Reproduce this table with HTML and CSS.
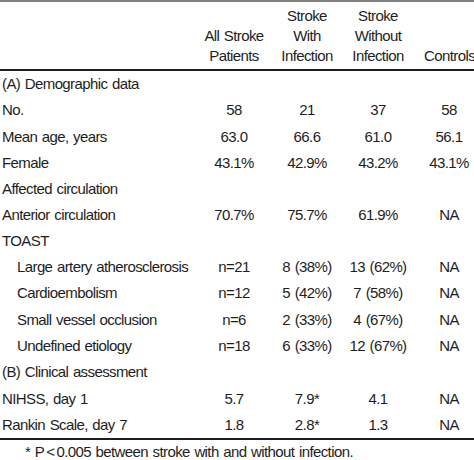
FILE: index.html
```html
<!DOCTYPE html>
<html>
<head>
<meta charset="utf-8">
<link rel="stylesheet" href="styles.css">
</head>
<body>
<div class="topbar"></div>
<table class="tbl">
  <colgroup>
    <col class="c-label">
    <col class="c-all">
    <col class="c-with">
    <col class="c-without">
    <col class="c-ctrl">
  </colgroup>
  <thead>
    <tr>
      <th class="label"></th>
      <th>All Stroke<br>Patients</th>
      <th>Stroke<br>With<br>Infection</th>
      <th>Stroke<br>Without<br>Infection</th>
      <th class="ctrl">Controls</th>
    </tr>
  </thead>
  <tbody>
    <tr><td class="label" colspan="5">(A) Demographic data</td></tr>
    <tr><td class="label">No.</td><td>58</td><td>21</td><td>37</td><td class="ctrl">58</td></tr>
    <tr class="tall"><td class="label">Mean age, years</td><td>63.0</td><td>66.6</td><td>61.0</td><td class="ctrl">56.1</td></tr>
    <tr><td class="label">Female</td><td>43.1%</td><td>42.9%</td><td>43.2%</td><td class="ctrl">43.1%</td></tr>
    <tr><td class="label" colspan="5">Affected circulation</td></tr>
    <tr><td class="label">Anterior circulation</td><td>70.7%</td><td>75.7%</td><td>61.9%</td><td class="ctrl">NA</td></tr>
    <tr><td class="label" colspan="5">TOAST</td></tr>
    <tr><td class="label sub">Large artery atherosclerosis</td><td>n=21</td><td>8 (38%)</td><td>13 (62%)</td><td class="ctrl">NA</td></tr>
    <tr><td class="label sub">Cardioembolism</td><td>n=12</td><td>5 (42%)</td><td>7 (58%)</td><td class="ctrl">NA</td></tr>
    <tr class="tall"><td class="label sub">Small vessel occlusion</td><td>n=6</td><td>2 (33%)</td><td>4 (67%)</td><td class="ctrl">NA</td></tr>
    <tr><td class="label sub">Undefined etiology</td><td>n=18</td><td>6 (33%)</td><td>12 (67%)</td><td class="ctrl">NA</td></tr>
    <tr><td class="label" colspan="5">(B) Clinical assessment</td></tr>
    <tr class="tall"><td class="label">NIHSS, day 1</td><td>5.7</td><td>7.9*</td><td>4.1</td><td class="ctrl">NA</td></tr>
    <tr class="last"><td class="label">Rankin Scale, day 7</td><td>1.8</td><td>2.8*</td><td>1.3</td><td class="ctrl">NA</td></tr>
  </tbody>
</table>
<p class="note">* P<span class="lt">&lt;</span>0.005 between stroke with and without infection.</p>
</body>
</html>
```

FILE: styles.css
```css
html, body {
  margin: 0;
  padding: 0;
  background: #fff;
  overflow: hidden;
}
body {
  font-family: "Liberation Sans", Arial, sans-serif;
  font-size: 15px;
  letter-spacing: -0.6px;
  word-spacing: 1px;
  color: #1e1e1e;
  width: 474px;
}
.topbar {
  height: 2px;
  background: #808080;
}
.tbl {
  border-collapse: collapse;
  table-layout: fixed;
  width: 474px;
}
.c-label { width: 198px; }
.c-all { width: 72px; }
.c-with { width: 74px; }
.c-without { width: 68px; }
.c-ctrl { width: 62px; }
th {
  font-weight: normal;
  text-align: center;
  vertical-align: bottom;
  line-height: 20px;
  padding: 4px 0 3px 0;
  border-bottom: 2px solid #1e1e1e;
}
td {
  text-align: center;
  line-height: 26px;
  padding: 0;
  white-space: nowrap;
}
.tall td { padding-top: 1px; }
.label {
  text-align: left;
  padding-left: 2px;
}
.sub { padding-left: 17px; }
.ctrl { padding-left: 12px; }
.last td { border-bottom: 2px solid #1e1e1e; }
.note {
  margin: 0;
  padding: 4px 0 0 25px;
  line-height: 16px;
}
.lt { margin: 0 2px; }
```
